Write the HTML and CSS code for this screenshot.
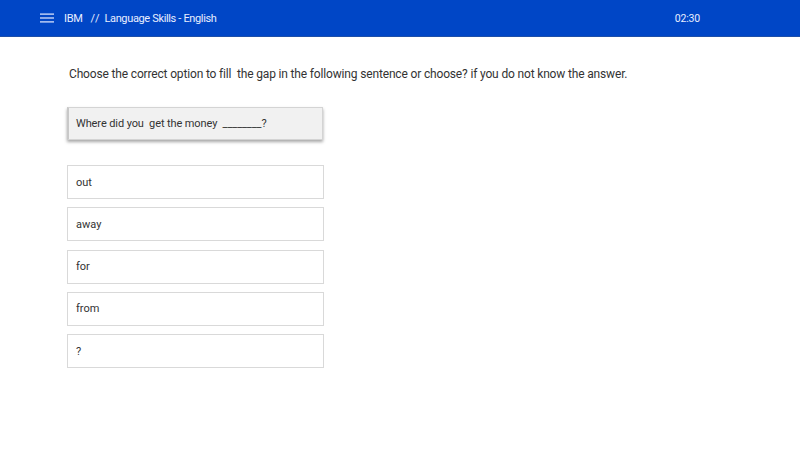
FILE: index.html
```html
<!DOCTYPE html>
<html>
<head>
<meta charset="utf-8">
<link rel="stylesheet" href="styles.css">
</head>
<body>
<header class="topbar">
  <div class="brand">
    <svg class="menu" width="14" height="10" viewBox="0 0 14 10"><rect x="0" y="0.5" width="14" height="1.2" fill="#e6ecff"/><rect x="0" y="4.4" width="14" height="1.2" fill="#e6ecff"/><rect x="0" y="8.3" width="14" height="1.2" fill="#e6ecff"/></svg>
    <span class="ibm">IBM</span>
    <span class="sep">//</span>
    <span class="title">Language Skills - English</span>
  </div>
  <div class="timer">02:30</div>
</header>
<main class="content">
  <p class="instruction">Choose the correct option to fill &nbsp;the gap in the following sentence or choose? if you do not know the answer.</p>
  <div class="question">Where did you &nbsp;get the money &nbsp;________?</div>
  <div class="options">
    <div class="option">out</div>
    <div class="option">away</div>
    <div class="option">for</div>
    <div class="option">from</div>
    <div class="option">?</div>
  </div>
</main>
</body>
</html>
```
FILE: styles.css
```css
* { box-sizing: border-box; }
html, body { margin: 0; padding: 0; background: #fff; }
body { font-family: Roboto, "Liberation Sans", Arial, sans-serif; color: #333; width: 800px; height: 450px; overflow: hidden; }
.topbar {
  height: 37px;
  background: #0046c6;
  border-bottom: 1px solid #1d4fa8;
  display: flex;
  align-items: center;
  justify-content: space-between;
  padding: 0 100px 0 40px;
  color: #e8eeff;
  font-size: 11px;
}
.brand { display: flex; align-items: center; }
.menu { display: block; margin-right: 10px; }
.ibm { margin-right: 8px; letter-spacing: -0.3px; }
.sep { margin-right: 4px; letter-spacing: 1px; }
.title { letter-spacing: -0.35px; }
.timer { font-size: 10.5px; letter-spacing: -0.2px; }
.content { padding: 29px 0 0 67px; }
.instruction { margin: 0 0 0 2px; font-size: 12px; line-height: 16px; color: #333; letter-spacing: -0.16px; }
.question {
  margin-top: 25px;
  width: 256px;
  height: 33px;
  background: #f1f1f1;
  border: 1px solid #d4d4d4;
  border-left: 2px solid #c8c8c8;
  box-shadow: 0 2px 3px rgba(0,0,0,0.35);
  font-size: 11px;
  display: flex;
  align-items: center;
  padding-left: 7px;
  color: #333;
  letter-spacing: -0.1px;
}
.options { margin-top: 25px; display: flex; flex-direction: column; gap: 8.3px; }
.option {
  width: 257px;
  height: 34px;
  border: 1px solid #d9d9d9;
  background: #fff;
  font-size: 11px;
  display: flex;
  align-items: center;
  padding-left: 8px;
  color: #333;
}
```
